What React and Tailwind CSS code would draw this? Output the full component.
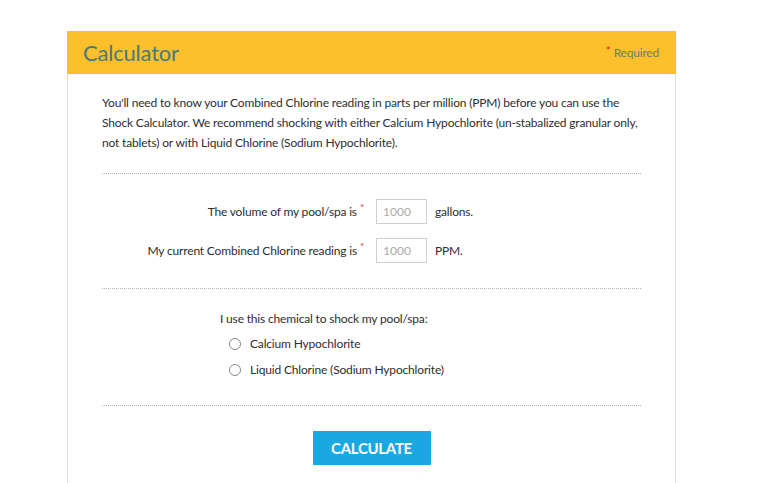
import React from "react";

const Asterisk = () => (
  <span className="text-[#e0331f] text-[10px] relative -top-[5px] ml-[3px]">*</span>
);

const Dotted = () => <div className="border-t border-dotted border-[#b5b5b5]" />;

export default function App() {
  return (
    <div className="min-h-screen bg-white pl-[67px] pt-[31px] text-[#2e2e2e]" style={{ fontFamily: "Lato, 'Liberation Sans', sans-serif" }}>
      <div className="w-[609px] border-x border-[#dedede] min-h-[460px]">
        <div className="h-[43px] bg-[#fbc02c] flex items-center justify-between pl-[16px] pr-[17px] -mx-px">
          <div className="text-[22px] text-[#477a7c] leading-none tracking-[-0.2px]">Calculator</div>
          <div className="text-[12px] text-[#6b7f70] leading-none tracking-[-0.2px]">
            <span className="text-[#e0331f] relative -top-[2px] mr-[3px]">*</span>Required
          </div>
        </div>
        <div className="px-[34px] pt-[19px] text-[12px] tracking-[-0.17px]">
          <p className="leading-[20px] mb-[20px]">
            You'll need to know your Combined Chlorine reading in parts per million (PPM) before you can use the Shock Calculator. We recommend shocking with either Calcium Hypochlorite (un-stabalized granular only, not tablets) or with Liquid Chlorine (Sodium Hypochlorite).
          </p>
          <Dotted />
          <div className="pt-[25px] pb-[25px] flex flex-col gap-[14px]">
            <div className="flex items-center">
              <div className="w-[262px] text-right">The volume of my pool/spa is<Asterisk /></div>
              <div className="ml-[12px] w-[51px] h-[25px] border border-[#cfcfcf] text-[12px] text-[#aaa] flex items-center pl-[6px] tracking-normal">1000</div>
              <div className="ml-[8px]">gallons.</div>
            </div>
            <div className="flex items-center">
              <div className="w-[262px] text-right">My current Combined Chlorine reading is<Asterisk /></div>
              <div className="ml-[12px] w-[51px] h-[25px] border border-[#cfcfcf] text-[12px] text-[#aaa] flex items-center pl-[6px] tracking-normal">1000</div>
              <div className="ml-[8px]">PPM.</div>
            </div>
          </div>
          <Dotted />
          <div className="pt-[20px] pb-[25px] pl-[118px]">
            <div className="leading-[20px]">I use this chemical to shock my pool/spa:</div>
            <div className="mt-[5px] flex flex-col gap-[6px] pl-[9px]">
              <label className="flex items-center leading-[20px]">
                <span className="w-[12px] h-[12px] rounded-full border border-[#8a8a8a] bg-white" />
                <span className="ml-[9px]">Calcium Hypochlorite</span>
              </label>
              <label className="flex items-center leading-[20px]">
                <span className="w-[12px] h-[12px] rounded-full border border-[#8a8a8a] bg-white" />
                <span className="ml-[9px]">Liquid Chlorine (Sodium Hypochlorite)</span>
              </label>
            </div>
          </div>
          <Dotted />
          <div className="pt-[25px] flex justify-center">
            <button className="w-[118px] h-[34px] bg-[#1aa8e3] text-white font-bold text-[15px] tracking-[-0.3px]">CALCULATE</button>
          </div>
        </div>
      </div>
    </div>
  );
}
